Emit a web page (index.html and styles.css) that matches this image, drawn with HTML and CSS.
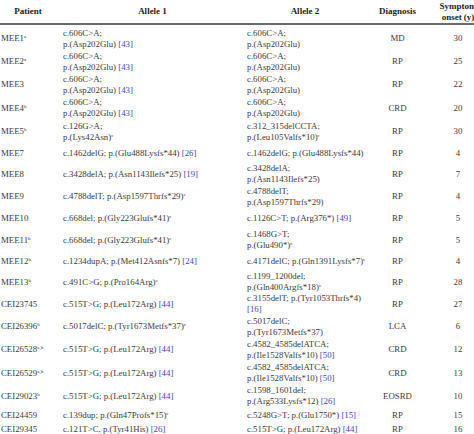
FILE: index.html
```html
<!DOCTYPE html>
<html>
<head>
<meta charset="utf-8">
<link rel="stylesheet" href="styles.css">
</head>
<body>
<table class="tbl">
  <colgroup>
    <col class="c-pat"><col class="c-a1"><col class="c-a2"><col class="c-dx"><col class="c-on">
  </colgroup>
  <thead>
    <tr class="head">
      <th>Patient</th><th>Allele 1</th><th>Allele 2</th><th>Diagnosis</th><th>Symptom<br>onset (y)</th>
    </tr>
  </thead>
  <tbody>
    <tr class="first"><td>MEE1<sup>a</sup></td><td>c.606C&gt;A;<br>p.(Asp202Glu) <a>[43]</a></td><td>c.606C&gt;A;<br>p.(Asp202Glu)</td><td>MD</td><td>30</td></tr>
    <tr class="h23"><td>MEE2<sup>a</sup></td><td>c.606C&gt;A;<br>p.(Asp202Glu) <a>[43]</a></td><td>c.606C&gt;A;<br>p.(Asp202Glu)</td><td>RP</td><td>25</td></tr>
    <tr class="h23"><td>MEE3</td><td>c.606C&gt;A;<br>p.(Asp202Glu) <a>[43]</a></td><td>c.606C&gt;A;<br>p.(Asp202Glu)</td><td>RP</td><td>22</td></tr>
    <tr class="h24"><td>MEE4<sup>b</sup></td><td>c.606C&gt;A;<br>p.(Asp202Glu) <a>[43]</a></td><td>c.606C&gt;A;<br>p.(Asp202Glu)</td><td>CRD</td><td>20</td></tr>
    <tr class="h23"><td>MEE5<sup>b</sup></td><td>c.126G&gt;A;<br>p.(Lys42Asn)<sup>c</sup></td><td>c.312_315delCCTA;<br>p.(Leu105Valfs*10)<sup>c</sup></td><td>RP</td><td>30</td></tr>
    <tr class="h20"><td>MEE7</td><td>c.1462delG; p.(Glu488Lysfs*44) <a>[26]</a></td><td>c.1462delG; p.(Glu488Lysfs*44)</td><td>RP</td><td>4</td></tr>
    <tr class="h21"><td>MEE8</td><td>c.3428delA; p.(Asn1143Ilefs*25) <a>[19]</a></td><td>c.3428delA;<br>p.(Asn1143Ilefs*25)</td><td>RP</td><td>7</td></tr>
    <tr class="h23"><td>MEE9</td><td>c.4788delT; p.(Asp1597Thrfs*29)<sup>c</sup></td><td>c.4788delT;<br>p.(Asp1597Thrfs*29)</td><td>RP</td><td>4</td></tr>
    <tr class="h21"><td>MEE10</td><td>c.668del; p.(Gly223Glufs*41)<sup>c</sup></td><td>c.1126C&gt;T; p.(Arg376*) <a>[49]</a></td><td>RP</td><td>5</td></tr>
    <tr class="h21"><td>MEE11<sup>b</sup></td><td>c.668del; p.(Gly223Glufs*41)<sup>c</sup></td><td>c.1468G&gt;T;<br>p.(Glu490*)<sup>c</sup></td><td>RP</td><td>5</td></tr>
    <tr class="h20"><td>MEE12<sup>b</sup></td><td>c.1234dupA; p.(Met412Asnfs*7) <a>[24]</a></td><td>c.4171delC; p.(Gln1391Lysfs*7)<sup>c</sup></td><td>RP</td><td>4</td></tr>
    <tr class="h20"><td>MEE13<sup>b</sup></td><td>c.491C&gt;G; p.(Pro164Arg)<sup>c</sup></td><td>c.1199_1200del;<br>p.(Gln400Argfs*18)<sup>c</sup></td><td>RP</td><td>28</td></tr>
    <tr class="h22"><td>CEI23745</td><td>c.515T&gt;G; p.(Leu172Arg) <a>[44]</a></td><td>c.3155delT; p.(Tyr1053Thrfs*4)<br><a>[16]</a></td><td>RP</td><td>27</td></tr>
    <tr class="h23"><td>CEI26396<sup>b</sup></td><td>c.5017delC; p.(Tyr1673Metfs*37)<sup>c</sup></td><td>c.5017delC;<br>p.(Tyr1673Metfs*37)</td><td>LCA</td><td>6</td></tr>
    <tr class="h23"><td>CEI26528<sup>a,b</sup></td><td>c.515T&gt;G; p.(Leu172Arg) <a>[44]</a></td><td>c.4582_4585delATCA;<br>p.(Ile1528Valfs*10) <a>[50]</a></td><td>CRD</td><td>12</td></tr>
    <tr class="h24"><td>CEI26529<sup>a,b</sup></td><td>c.515T&gt;G; p.(Leu172Arg) <a>[44]</a></td><td>c.4582_4585delATCA;<br>p.(Ile1528Valfs*10) <a>[50]</a></td><td>CRD</td><td>13</td></tr>
    <tr class="h22"><td>CEI29023<sup>b</sup></td><td>c.515T&gt;G; p.(Leu172Arg) <a>[44]</a></td><td>c.1598_1601del;<br>p.(Arg533Lysfs*12) <a>[26]</a></td><td>EOSRD</td><td>10</td></tr>
    <tr class="h16"><td>CEI24459</td><td>c.139dup; p.(Gln47Profs*15)<sup>c</sup></td><td>c.5248G&gt;T; p.(Glu1750*) <a>[15]</a></td><td>RP</td><td>15</td></tr>
    <tr class="h12"><td>CEI29345</td><td>c.121T&gt;C, p.(Tyr41His) <a>[26]</a></td><td>c.515T&gt;G; p.(Leu172Arg) <a>[44]</a></td><td>RP</td><td>16</td></tr>
  </tbody>
</table>
</body>
</html>
```
FILE: styles.css
```css
html, body {
  margin: 0;
  padding: 0;
  overflow: hidden;
  background: #ffffff;
}
body {
  width: 474px;
  font-family: "Liberation Serif", "Times New Roman", serif;
  color: #3a3a3a;
}
.tbl {
  table-layout: fixed;
  border-collapse: separate;
  border-spacing: 0;
  width: 490px;
  margin-left: -4px;
  font-size: 8.8px;
  line-height: 11px;
}
.c-pat { width: 64px; }
.c-a1 { width: 185px; }
.c-a2 { width: 120px; }
.c-dx { width: 65px; }
.c-on { width: 56px; }

.tbl th {
  font-weight: bold;
  font-size: 9px;
  color: #222222;
  text-align: center;
  vertical-align: middle;
  padding: 0;
  border-bottom: 2px solid #6a6a6a;
  white-space: nowrap;
}
.tbl td {
  padding: 0;
  vertical-align: middle;
  white-space: nowrap;
}
.tbl td:nth-child(1) { padding-left: 5px; }
.tbl td:nth-child(2) { padding-left: 3px; }
.tbl td:nth-child(3) { padding-left: 2px; }
.tbl td:nth-child(4),
.tbl td:nth-child(5) { text-align: center; }

.head { height: 25px; }
.first { height: 25px; }
.first td { padding-top: 2px; }
.h12 { height: 12px; }
.h16 { height: 16px; }
.h20 { height: 20px; }
.h21 { height: 21px; }
.h22 { height: 22px; }
.h23 { height: 23px; }
.h24 { height: 24px; }

.tbl sup {
  font-size: 5px;
  line-height: 0;
  vertical-align: 3px;
}
.tbl a {
  color: #3a48c0;
}
```
